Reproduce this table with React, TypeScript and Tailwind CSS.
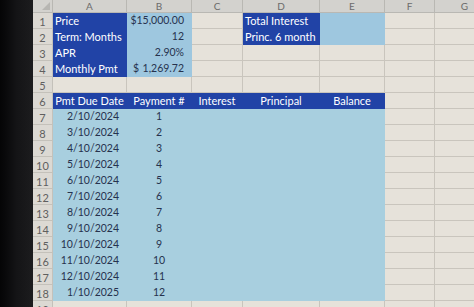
import React from "react";

type Kind = "dk" | "lt" | "tb" | "bl";
type C = { k: Kind; t?: React.ReactNode; a?: "l" | "r" | "c"; n?: boolean };

const bl: C = { k: "bl" };

const cls: Record<Kind, string> = {
  dk: "bg-[#2143a6] border-[#2143a6] text-white",
  lt: "bg-[#9ec7df] border-[#9ec7df] text-[#26324e]",
  tb: "bg-[#a8cfdf] border-[#a8cfdf] text-[#26324e]",
  bl: "bg-[#e6e2da] border-[#c9c5bd] text-[#26324e]",
};
const al = { l: "justify-start pl-[2px]", r: "justify-end pr-[7px]", c: "justify-center" };

const dates = [
  "2/10/2024", "3/10/2024", "4/10/2024", "5/10/2024", "6/10/2024", "7/10/2024",
  "8/10/2024", "9/10/2024", "10/10/2024", "11/10/2024", "12/10/2024", "1/10/2025",
];

const rows: C[][] = [
  [{ k: "dk", t: "Price", a: "l" }, { k: "lt", t: "$15,000.00", a: "r", n: true }, bl, { k: "dk", t: "Total Interest", a: "l" }, { k: "lt" }, bl, bl],
  [{ k: "dk", t: "Term: Months", a: "l" }, { k: "lt", t: "12", a: "r", n: true }, bl, { k: "dk", t: "Princ. 6 month", a: "l" }, { k: "lt" }, bl, bl],
  [{ k: "dk", t: "APR", a: "l" }, { k: "lt", t: "2.90%", a: "r", n: true }, bl, bl, bl, bl, bl],
  [
    { k: "dk", t: "Monthly Pmt", a: "l" },
    {
      k: "lt",
      n: true,
      t: (
        <span className="flex w-full justify-between pl-[4px] pr-[7px]">
          <span>$</span>
          <span>1,269.72</span>
        </span>
      ),
      a: "l",
    },
    bl, bl, bl, bl, bl,
  ],
  [bl, bl, bl, bl, bl, bl, bl],
  [
    { k: "dk", t: "Pmt Due Date", a: "c" },
    { k: "dk", t: "Payment #", a: "c" },
    { k: "dk", t: "Interest", a: "c" },
    { k: "dk", t: "Principal", a: "c" },
    { k: "dk", t: "Balance", a: "c" },
    bl, bl,
  ],
  ...dates.map((d, i): C[] => [
    { k: "tb", t: d, a: "r", n: true },
    { k: "tb", t: String(i + 1), a: "c", n: true },
    { k: "tb" }, { k: "tb" }, { k: "tb" }, bl, bl,
  ]),
  [bl, bl, bl, bl, bl, bl, bl],
];

const letters = ["A", "B", "C", "D", "E", "F", "G"];

export default function App() {
  return (
    <div className="flex h-[307px] w-[474px] overflow-hidden bg-[#0c0c0e] font-['Lato',sans-serif]">
      <div className="h-full w-[33px] shrink-0 bg-gradient-to-r from-[#050506] via-[#141416] to-[#1c1c1e]" />
      <div className="grid flex-1 grid-cols-[20px_74px_65px_51px_77px_65px_50px_60px] grid-rows-[13px_repeat(19,16px)] content-start bg-[#e6e2da]">
        <div className="relative border-b border-r border-[#b9b8b3] bg-[#d3d2ce]">
          <div className="absolute bottom-[2px] right-[2px] h-0 w-0 border-b-[8px] border-l-[8px] border-b-[#b7b6b2] border-l-transparent" />
        </div>
        {letters.map((l) => (
          <div
            key={l}
            className="flex items-center justify-center border-b border-r border-[#b9b8b3] bg-[#d3d2ce] text-[10px] leading-none text-[#6b6b6b]"
          >
            {l}
          </div>
        ))}
        {rows.map((r, ri) => (
          <React.Fragment key={ri}>
            <div className="flex items-start justify-center border-b border-r border-[#c4c1ba] bg-[#dcd9d3] pt-[3px] text-[11px] leading-none text-[#5f5f5f]">
              {ri + 1}
            </div>
            {r.map((c, ci) => (
              <div
                key={ci}
                className={`flex items-center overflow-hidden whitespace-nowrap border-b border-r leading-none ${c.n ? "text-[10.5px]" : "text-[11px]"} ${cls[c.k]} ${al[c.a ?? "l"]}`}
              >
                {c.t}
              </div>
            ))}
          </React.Fragment>
        ))}
      </div>
    </div>
  );
}
